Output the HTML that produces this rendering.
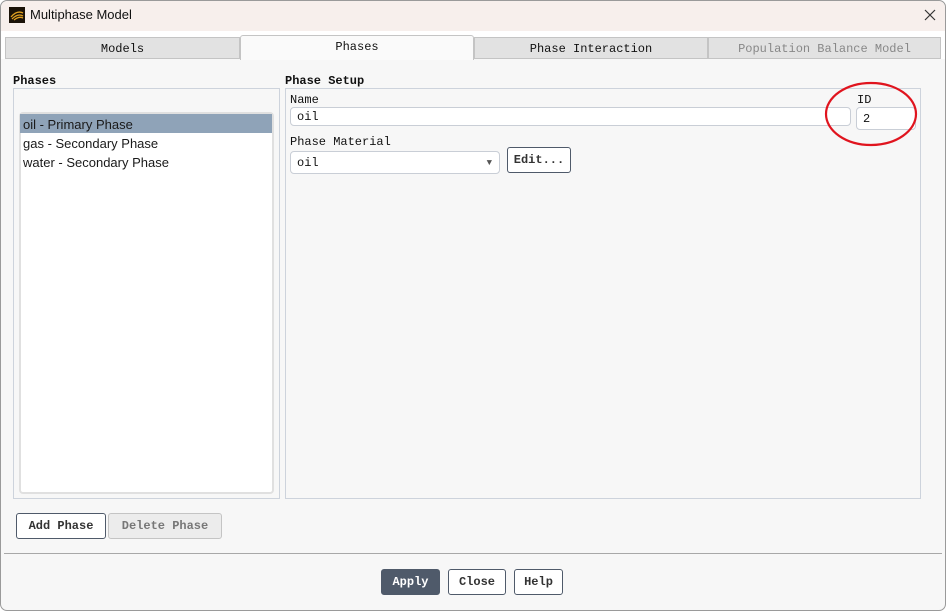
<!DOCTYPE html>
<html><head><style>
*{box-sizing:border-box;margin:0;padding:0}
body{width:946px;height:611px;background:#fff;position:relative;overflow:hidden;font-family:"Liberation Mono",monospace;font-size:12px;color:#111}
.a{position:absolute}
.tab{position:absolute;top:37px;height:22px;background:#e2e2e2;border:1px solid #c4c4c4;text-align:center;line-height:22px;font-size:12px}
.lbl{position:absolute;font-size:12px}
.inp{position:absolute;background:#fff;border:1px solid #c9ced6;border-radius:4px;padding-left:6px;font-size:12px}
.btn{position:absolute;border:1px solid #4f5a6a;border-radius:3px;background:#fff;text-align:center;font-weight:bold;font-size:12px;line-height:25px;color:#333}
.li{position:absolute;left:23px;font-family:"Liberation Sans",sans-serif;font-size:13px;color:#1a1a1a}
</style></head><body>
<div class="a" style="left:0;top:0;width:946px;height:611px;border:1px solid #9a9a9a;border-radius:7px;background:#f7f7f7"></div>
<div class="a" style="left:1px;top:1px;width:944px;height:30px;background:#f7efec;border-radius:7px 7px 0 0"></div>
<div class="a" style="left:9px;top:7px;width:16px;height:16px;background:#1a1208"><svg width="16" height="16"><path d="M2 10 Q8 3 14 6 M3 12 Q9 6 14 9 M5 13 Q10 9 14 11" stroke="#e0a020" stroke-width="1.3" fill="none"/></svg></div>
<div class="a" style="left:30px;top:7px;font-family:'Liberation Sans',sans-serif;font-size:13px">Multiphase Model</div>
<svg class="a" style="left:924px;top:9px" width="12" height="12"><path d="M1 1L11 11M11 1L1 11" stroke="#333" stroke-width="1.2"/></svg>
<div class="a" style="left:1px;top:31px;width:944px;height:28px;background:#fff"></div>
<div class="tab" style="left:5px;width:235px">Models</div>
<div class="tab" style="left:240px;top:35px;height:25px;width:234px;background:#fafafa;border-bottom:none;border-radius:3px 3px 0 0">Phases</div>
<div class="tab" style="left:474px;width:234px">Phase Interaction</div>
<div class="tab" style="left:708px;width:233px;color:#888">Population Balance Model</div>
<div class="lbl" style="left:13px;top:74px;font-weight:bold">Phases</div>
<div class="lbl" style="left:285px;top:74px;font-weight:bold">Phase Setup</div>
<div class="a" style="left:13px;top:88px;width:267px;height:411px;border:1px solid #cdd3dc"></div>
<div class="a" style="left:19px;top:112px;width:255px;height:382px;border:2px solid #e0e0e0;border-radius:4px;background:#fff"></div>
<div class="a" style="left:20px;top:114px;width:252px;height:19px;background:#8fa3b8"></div>
<div class="li" style="top:117px">oil - Primary Phase</div>
<div class="li" style="top:136px">gas - Secondary Phase</div>
<div class="li" style="top:155px">water - Secondary Phase</div>
<div class="a" style="left:285px;top:88px;width:636px;height:411px;border:1px solid #cdd3dc"></div>
<div class="lbl" style="left:290px;top:93px">Name</div>
<div class="inp" style="left:290px;top:107px;width:561px;height:19px;line-height:18px">oil</div>
<div class="lbl" style="left:857px;top:93px">ID</div>
<div class="inp" style="left:856px;top:107px;width:60px;height:23px;line-height:23px">2</div>
<div class="lbl" style="left:290px;top:135px">Phase Material</div>
<div class="inp" style="left:290px;top:151px;width:210px;height:23px;line-height:22px">oil<span style="position:absolute;right:7px;top:0;font-size:9px;color:#555">▼</span></div>
<div class="btn" style="left:507px;top:147px;width:64px;height:26px">Edit...</div>
<svg class="a" style="left:820px;top:80px" width="100" height="70"><ellipse cx="51" cy="34" rx="45" ry="31" stroke="#e0141e" stroke-width="2.2" fill="none"/></svg>
<div class="btn" style="left:16px;top:513px;width:90px;height:26px">Add Phase</div>
<div class="btn" style="left:108px;top:513px;width:114px;height:26px;border-color:#c4c4c4;background:#ececec;color:#777">Delete Phase</div>
<div class="a" style="left:4px;top:553px;width:938px;height:1px;background:#a8a8a8"></div>
<div class="btn" style="left:381px;top:569px;width:59px;height:26px;background:#4f5a6a;color:#fff">Apply</div>
<div class="btn" style="left:448px;top:569px;width:58px;height:26px">Close</div>
<div class="btn" style="left:514px;top:569px;width:49px;height:26px">Help</div>
</body></html>
